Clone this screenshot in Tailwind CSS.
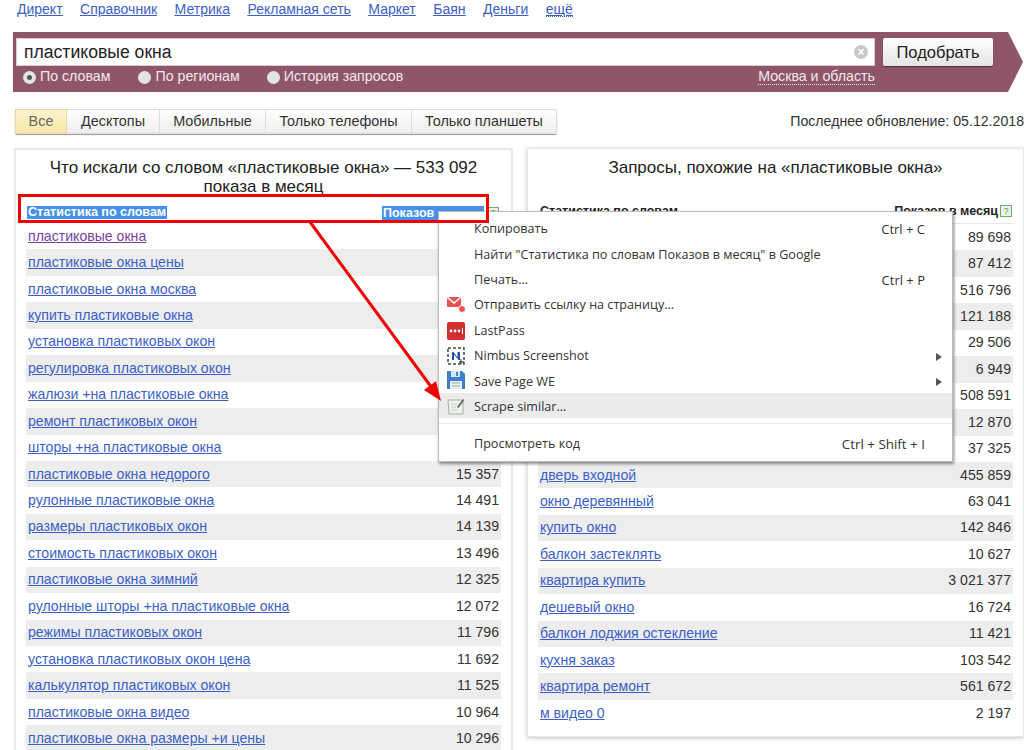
<!DOCTYPE html>
<html lang="ru">
<head>
  <meta charset="utf-8" />
  <title>Подбор слов</title>
  <script src="https://cdn.jsdelivr.net/npm/@tailwindcss/browser@4"></script>
</head>
<body class="bg-white">
<div class="relative h-[750px] w-[1024px] overflow-hidden bg-white font-['Liberation_Sans',Arial,sans-serif] text-[#333]">

  <!-- top links -->
  <nav class="flex h-[32px] gap-[17.5px] pl-[17px] pt-[1px] text-[14px] leading-[16px] text-[#3b5fc8] underline">
    <a>Директ</a><a>Справочник</a><a>Метрика</a><a>Рекламная сеть</a><a>Маркет</a><a>Баян</a><a>Деньги</a>
    <a class="no-underline border-b border-dotted border-[#3b5fc8] h-[16px]">ещё</a>
  </nav>

  <!-- search band -->
  <div class="ml-[13px] h-[60px] w-[1011px] bg-[#8f5569] pl-[3px] pt-[6px] [clip-path:polygon(0_0,995px_0,1010px_50%,995px_100%,0_100%)]">
    <div class="flex items-start">
      <div class="flex h-[28px] w-[859px] items-center justify-between border border-[#d9cdd2] bg-white pl-[7px] pr-[6px] text-[17.6px] text-[#222]">
        <span>пластиковые окна</span>
        <span class="flex h-[14px] w-[14px] items-center justify-center rounded-full bg-[#c8c8c8] text-[12px] leading-none font-bold text-white">×</span>
      </div>
      <button class="ml-[8px] h-[28px] w-[110px] rounded-[2px] bg-gradient-to-b from-white to-[#e4e4e4] text-[16.500px] text-[#222] shadow-[0_1px_1px_rgba(0,0,0,.45)]">Подобрать</button>
    </div>
    <div class="flex h-[22px] w-[859px] items-center pl-[7px] text-[14.2px] text-[#f3e8ec]">
      <span class="flex h-[13px] w-[13px] items-center justify-center rounded-full bg-[#e4e4e4]"><span class="h-[5px] w-[5px] rounded-full bg-[#555]"></span></span>
      <span class="ml-[4px]">По словам</span>
      <span class="ml-[28px] h-[13px] w-[13px] rounded-full bg-[#e4e4e4]"></span>
      <span class="ml-[4px]">По регионам</span>
      <span class="ml-[27px] h-[13px] w-[13px] rounded-full bg-[#e4e4e4]"></span>
      <span class="ml-[4px]">История запросов</span>
      <span class="ml-auto border-b border-dotted border-[#f3e8ec] leading-[15px]">Москва и область</span>
    </div>
  </div>

  <!-- device tabs -->
  <div class="mt-[17px] flex h-[25px] items-center justify-between pl-[15px] text-[14.400px] text-[#333]">
    <div class="flex h-[25px] items-stretch rounded-[2px] shadow-[0_1px_1px_rgba(0,0,0,.4)]">
      <span class="flex w-[52px] items-center justify-center border border-[#e5d9a8] bg-gradient-to-b from-[#fdf3cd] to-[#f8e7a8] text-[#666]">Все</span>
      <span class="flex w-[93px] items-center justify-center border border-l-0 border-[#ddd] bg-gradient-to-b from-white to-[#eee]">Десктопы</span>
      <span class="flex w-[106px] items-center justify-center border border-l-0 border-[#ddd] bg-gradient-to-b from-white to-[#eee]">Мобильные</span>
      <span class="flex w-[146px] items-center justify-center border border-l-0 border-[#ddd] bg-gradient-to-b from-white to-[#eee]">Только телефоны</span>
      <span class="flex w-[145px] items-center justify-center border border-l-0 border-[#ddd] bg-gradient-to-b from-white to-[#eee]">Только планшеты</span>
    </div>
    <span class="text-[14.150px] text-[#333]">Последнее обновление: 05.12.2018</span>
  </div>

  <!-- two result cards -->
  <div class="mt-[14px] flex items-start pl-[14px] text-[14px]">
    <section class="h-[602px] w-[499px] border-2 border-b-0 border-[#e8e8e8] px-[10px]">
      <h2 class="mx-auto w-[440px] pt-[8px] text-center text-[17px] leading-[19px] font-normal text-[#222]">Что искали со словом «пластиковые окна» — 533 092 показа в месяц</h2>
      <div class="relative flex h-[27px] items-center justify-between pt-[6px] text-[12.500px] font-bold text-white">
        <span class="ml-[1px] bg-[#4592ee] px-[1px] leading-[13px]">Статистика по словам</span>
        <span class="mr-[17px] mt-[2px] w-[102px] bg-[#4592ee] pl-[1px] leading-[15px]">Показов</span>
        <span class="absolute right-[2px] top-[11px] flex h-[12px] w-[12px] items-center justify-center border border-[#6aaa6a] bg-[#eaf4e4] text-[9px] leading-none font-normal text-[#4f944f]">?</span>
      </div>
      <div id="left-rows"></div>
    </section>

    <section class="ml-[14px] h-[589px] w-[497px] border border-[#e8e8e8] px-[10px] shadow-[0_1px_4px_rgba(0,0,0,.25)]">
      <h2 class="pt-[9px] text-center text-[17px] leading-[19px] font-normal text-[#222]">Запросы, похожие на «пластиковые окна»</h2>
      <div class="relative mt-[22px] flex h-[25px] items-center justify-between border-b border-[#e8e8e8] text-[12.500px] font-bold text-[#222]">
        <span class="ml-[2px]">Статистика по словам</span>
        <span class="mr-[15px]">Показов в месяц</span>
        <span class="absolute right-[1px] top-[6px] flex h-[12px] w-[12px] items-center justify-center border border-[#6aaa6a] bg-[#eaf4e4] text-[9px] leading-none font-normal text-[#4f944f]">?</span>
      </div>
      <div id="right-rows"></div>
    </section>
  </div>

  <!-- context menu -->
  <div class="absolute left-[438px] top-[211px] h-[251px] w-[515px] border border-[#bbb] bg-white pt-[5px] font-['Open_Sans',sans-serif] text-[12.600px] text-[#333] shadow-[1px_2px_3px_rgba(0,0,0,.45)]">
    <div class="flex h-[25.4px] items-center justify-between pl-[35px] pr-[27px]"><span>Копировать</span><span class="text-[13px]">Ctrl + C</span></div>
    <div class="flex h-[25.4px] items-center justify-between pl-[35px] pr-[27px]"><span>Найти "Статистика по словам Показов в месяц" в Google</span></div>
    <div class="flex h-[25.4px] items-center justify-between pl-[35px] pr-[27px]"><span>Печать...</span><span class="text-[13px]">Ctrl + P</span></div>
    <div class="relative flex h-[25.4px] items-center pl-[35px]">
      <svg class="absolute left-[8px] top-[3px]" width="19" height="17" viewBox="0 0 19 17"><path d="M0 1h14v9a1 1 0 0 1-1 1H1a1 1 0 0 1-1-1z" fill="#e8534f"/><path d="M0 1l7 6 7-6" fill="none" stroke="#fff" stroke-width="1.5"/><circle cx="15" cy="13" r="3.500" fill="#e8534f" stroke="#fff"/></svg>
      <span>Отправить ссылку на страницу...</span>
    </div>
    <div class="relative flex h-[25.4px] items-center pl-[35px]">
      <svg class="absolute left-[8px] top-[3px]" width="18" height="18" viewBox="0 0 18 18"><rect width="18" height="18" rx="2" fill="#cf2f2f"/><circle cx="4" cy="9" r="1.400" fill="#fff"/><circle cx="8" cy="9" r="1.400" fill="#fff"/><circle cx="12" cy="9" r="1.400" fill="#fff"/><path d="M15.500 6v6" stroke="#fff"/></svg>
      <span>LastPass</span>
    </div>
    <div class="relative flex h-[25.4px] items-center pl-[35px] pr-[10px]">
      <svg class="absolute left-[8px] top-[3px]" width="18" height="18" viewBox="0 0 18 18"><rect x="1" y="1" width="16" height="16" fill="none" stroke="#444" stroke-width="1.500" stroke-dasharray="3 2"/><path d="M5 13V5h1.500l4 5.500V5H13v8h-1.500L7 7.500V13z" fill="#1f4fa8"/><path d="M14 12v5M12 15h5" stroke="#222"/></svg>
      <span>Nimbus Screenshot</span>
      <span class="ml-auto h-0 w-0 border-y-[4px] border-l-[6px] border-y-transparent border-l-[#555]"></span>
    </div>
    <div class="relative flex h-[25.4px] items-center pl-[35px] pr-[10px]">
      <svg class="absolute left-[8px] top-[2px]" width="18" height="18" viewBox="0 0 18 18"><path d="M0 0h15l3 3v15H0z" fill="#3f7fc9"/><rect x="4" y="0" width="9" height="6" fill="#d9e6f5"/><rect x="9" y="1" width="2" height="4" fill="#3f7fc9"/><rect x="3" y="10" width="12" height="8" fill="#e8eef5"/><path d="M5 12h8M5 15h8" stroke="#9ab"/></svg>
      <span>Save Page WE</span>
      <span class="ml-auto h-0 w-0 border-y-[4px] border-l-[6px] border-y-transparent border-l-[#555]"></span>
    </div>
    <div class="relative -mt-[2px] flex h-[25.6px] items-center bg-[#ebebeb] pl-[35px] pt-[3px]">
      <svg class="absolute left-[8px] top-[4px]" width="18" height="18" viewBox="0 0 18 18"><path d="M1 3h13l2 2v12H2z" fill="#eef2ee" stroke="#a5ada5"/><path d="M4 7h6M4 10h5M4 13h7" stroke="#c5cdc5"/><path d="M10 10l6-8 1.500 1-6 8z" fill="#666"/></svg>
      <span>Scrape similar...</span>
    </div>
    <div class="mt-[5px] h-px bg-[#e9e9e9]"></div>
    <div class="flex h-[37px] items-center justify-between pl-[35px] pr-[27px] pt-[3px]"><span>Просмотреть код</span><span class="text-[13.400px]">Ctrl + Shift + I</span></div>
  </div>

  <!-- red annotation -->
  <svg class="pointer-events-none absolute left-0 top-0" width="1024" height="750" viewBox="0 0 1024 750">
    <rect x="19.500" y="195.500" width="468" height="26" fill="none" stroke="#f00000" stroke-width="3"/>
    <path d="M310 222L432 388" fill="none" stroke="#f00000" stroke-width="3"/>
    <path d="M441 401L424 390L436 381z" fill="#f00000"/>
  </svg>

  <script>
    const left = [
      ['пластиковые окна', ''], ['пластиковые окна цены', ''], ['пластиковые окна москва', ''],
      ['купить пластиковые окна', ''], ['установка пластиковых окон', ''], ['регулировка пластиковых окон', ''],
      ['жалюзи +на пластиковые окна', ''], ['ремонт пластиковых окон', ''], ['шторы +на пластиковые окна', ''],
      ['пластиковые окна недорого', '15 357'], ['рулонные пластиковые окна', '14 491'],
      ['размеры пластиковых окон', '14 139'], ['стоимость пластиковых окон', '13 496'],
      ['пластиковые окна зимний', '12 325'], ['рулонные шторы +на пластиковые окна', '12 072'],
      ['режимы пластиковых окон', '11 796'], ['установка пластиковых окон цена', '11 692'],
      ['калькулятор пластиковых окон', '11 525'], ['пластиковые окна видео', '10 964'],
      ['пластиковые окна размеры +и цены', '10 296']
    ];
    const right = [
      ['', '89 698'], ['', '87 412'], ['', '516 796'], ['', '121 188'], ['', '29 506'], ['', '6 949'],
      ['', '508 591'], ['', '12 870'], ['', '37 325'], ['дверь входной', '455 859'], ['окно деревянный', '63 041'],
      ['купить окно', '142 846'], ['балкон застеклять', '10 627'], ['квартира купить', '3 021 377'],
      ['дешевый окно', '16 724'], ['балкон лоджия остекление', '11 421'], ['кухня заказ', '103 542'],
      ['квартира ремонт', '561 672'], ['м видео 0', '2 197']
    ];
    const rows = (list, firstVisited) => list.map(([name, count], i) => `
      <div class="flex h-[26.45px] items-center justify-between px-[2px] text-[14.100px] ${i % 2 ? 'bg-[#ededed]' : ''}">
        <a class="underline ${firstVisited && i === 0 ? 'text-[#7a3f9e]' : 'text-[#3b5fc8]'}">${name}</a>
        <span class="text-[#333]">${count}</span>
      </div>`).join('');
    document.getElementById('left-rows').innerHTML = rows(left, true);
    document.getElementById('right-rows').innerHTML = rows(right, false);
  </script>
</div>
</body>
</html>
